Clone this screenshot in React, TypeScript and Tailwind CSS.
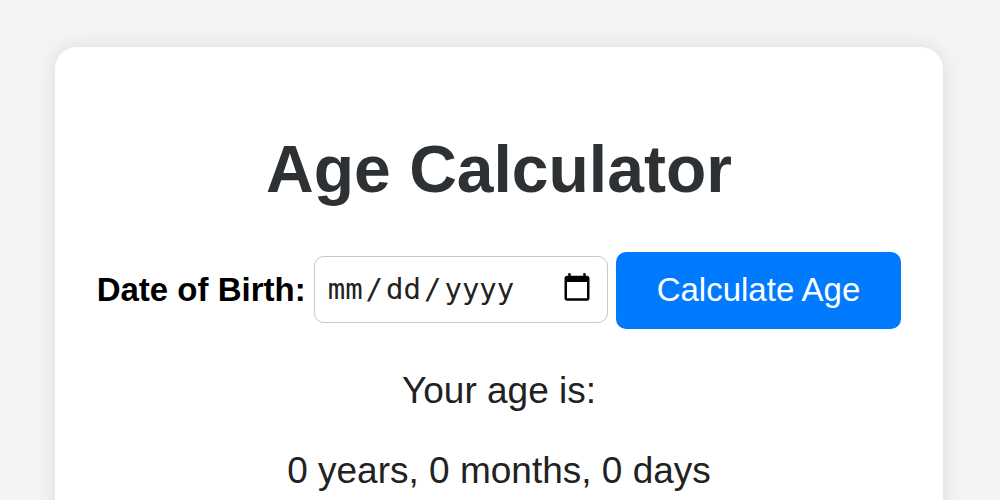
import React, { useState } from 'react';

interface Age {
  years: number;
  months: number;
  days: number;
}

const getAge = (birthDate: string): Age => {
  const [year, month, day] = birthDate.split('-').map(Number);
  const today = new Date();

  let years = today.getFullYear() - year;
  let months = today.getMonth() + 1 - month;
  let days = today.getDate() - day;

  if (days < 0) {
    months -= 1;
    // Days in the previous month
    days += new Date(today.getFullYear(), today.getMonth(), 0).getDate();
  }
  if (months < 0) {
    years -= 1;
    months += 12;
  }

  return { years, months, days };
};

const App: React.FC = () => {
  const [birthDate, setBirthDate] = useState('');
  const [age, setAge] = useState<Age>({ years: 0, months: 0, days: 0 });

  const handleSubmit = (e: React.FormEvent) => {
    e.preventDefault();
    if (birthDate) {
      setAge(getAge(birthDate));
    }
  };

  return (
    <div className="min-h-screen bg-[#f4f4f4] pt-[47px] pr-[57px] pl-[55px] font-['Liberation_Sans',Arial,sans-serif]">
      <main className="rounded-[22px] bg-white px-10 pt-[84px] pb-20 text-center shadow-[0_0_20px_rgba(0,0,0,0.1)]">
        <h1 className="text-[66px] leading-[76px] font-bold text-[#2d3133]">Age Calculator</h1>

        {/* Birth date form */}
        <form onSubmit={handleSubmit} className="mt-[45px] flex items-center justify-center gap-2">
          <label htmlFor="dob" className="pb-0.5 text-[33px] font-bold whitespace-nowrap text-black">
            Date of Birth:
          </label>
          <input
            id="dob"
            type="date"
            value={birthDate}
            onChange={(e) => setBirthDate(e.target.value)}
            className="mb-0.5 h-[67px] w-[294px] shrink-0 rounded-[10px] border border-[#c8c8cc] bg-white pr-3 pl-3 font-['DejaVu_Sans_Mono',monospace] text-[29px] text-[#222] [&::-webkit-calendar-picker-indicator]:mb-1 [&::-webkit-calendar-picker-indicator]:size-8 [&::-webkit-datetime-edit-text]:px-0.5"
          />
          <button
            type="submit"
            className="h-[77px] rounded-[10px] bg-[#007bff] px-[41px] pb-0.5 text-[33px] whitespace-nowrap text-white"
          >
            Calculate Age
          </button>
        </form>

        {/* Result */}
        <div className="mt-10 space-y-9 text-[37px] leading-[44px] text-[#222]">
          <p>Your age is:</p>
          <p>
            {age.years} years, {age.months} months, {age.days} days
          </p>
        </div>
      </main>
    </div>
  );
};

export default App;
